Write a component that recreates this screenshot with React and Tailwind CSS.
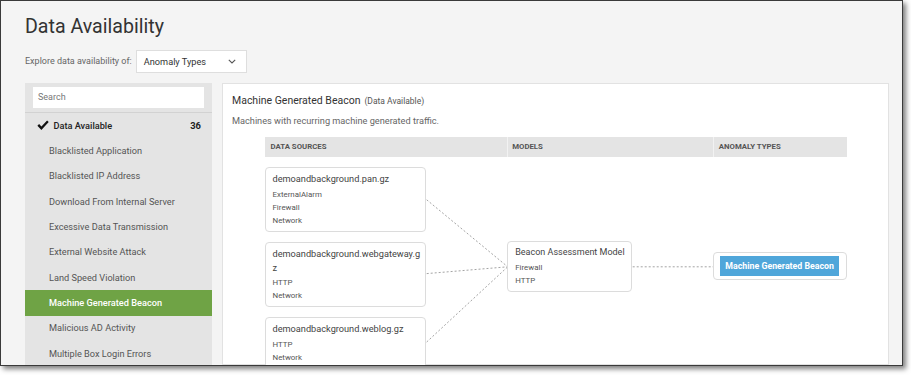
import React from "react";

const items = [
  "Blacklisted Application",
  "Blacklisted IP Address",
  "Download From Internal Server",
  "Excessive Data Transmission",
  "External Website Attack",
  "Land Speed Violation",
  "Machine Generated Beacon",
  "Malicious AD Activity",
  "Multiple Box Login Errors",
];

const sources = [
  { title: "demoandbackground.pan.gz", items: ["ExternalAlarm", "Firewall", "Network"] },
  { title: "demoandbackground.webgateway.gz", items: ["HTTP", "Network"] },
  { title: "demoandbackground.weblog.gz", items: ["HTTP", "Network"] },
];

function Check() {
  return (
    <svg width="12" height="11" viewBox="0 0 12 11" className="block">
      <path d="M0.4 5.8 L2.1 4.1 L4.4 6.5 L10.1 0.4 L11.7 2 L4.4 9.9 Z" fill="#111" />
    </svg>
  );
}

function SourceCard({ title, items }) {
  return (
    <div className="w-[161.5px] rounded-[4px] border border-[#dcdcdc] bg-white pl-[7px] pr-[3px] pt-[4px] pb-[3px]">
      <div className="text-[9.2px] leading-[13.4px] text-[#444] break-all">{title}</div>
      <div className="mt-[2px]">
        {items.map((i) => (
          <div key={i} className="text-[7.9px] leading-[13.4px] text-[#555]">
            {i}
          </div>
        ))}
      </div>
    </div>
  );
}

export default function App() {
  return (
    <div className="w-[911px] h-[375px] bg-white font-[Roboto,sans-serif]">
      <div className="w-[903px] h-[366px] border border-[#3a3a3a] bg-[#f4f4f4] overflow-hidden flex flex-col shadow-[3px_3px_5px_rgba(0,0,0,0.5)]">
        <div className="pt-[13.5px] pl-[24px]">
          <h1 className="text-[19.6px] leading-[24px] text-[#333] font-normal">Data Availability</h1>
        </div>
        <div className="mt-[11.5px] pl-[24px] flex items-center gap-[4px]">
          <span className="text-[9px] text-[#666]">Explore data availability of:</span>
          <div className="w-[111px] h-[23px] bg-white border border-[#dedede] flex items-center justify-between pl-[7px] pr-[10px]">
            <span className="text-[9.2px] text-[#333]">Anomaly Types</span>
            <svg width="8" height="5" viewBox="0 0 8 5">
              <polyline points="0.8,0.8 4,4 7.2,0.8" fill="none" stroke="#555" strokeWidth="1.1" />
            </svg>
          </div>
        </div>
        <div className="mt-[10px] flex-1 min-h-0 flex gap-[10px] pl-[24px] pr-[13px]">
          <div className="w-[187px] flex-none bg-[#e4e4e4] flex flex-col">
            <div className="flex-none px-[8px] pt-[4px] pb-[4px] border-b border-[#d2d2d2]">
              <div className="h-[21px] bg-white flex items-center pl-[5px] text-[9px] text-[#777]">Search</div>
            </div>
            <div className="flex-none h-[25.33px] flex items-center pl-[11.5px] pr-[11px]">
              <Check />
              <span className="ml-[5px] text-[9.2px] font-medium text-[#222] flex-1">Data Available</span>
              <span className="text-[9.4px] font-bold text-[#222]">36</span>
            </div>
            {items.map((it) => {
              const active = it === "Machine Generated Beacon";
              return (
                <div
                  key={it}
                  className={
                    active
                      ? "flex-none h-[25.33px] flex items-center pl-[24px] bg-[#6fa345] text-white text-[9.2px] font-medium"
                      : "flex-none h-[25.33px] flex items-center pl-[24px] text-[#555] text-[9.2px]"
                  }
                >
                  {it}
                </div>
              );
            })}
          </div>
          <div className="flex-1 bg-white border border-[#e2e2e2] pt-[8px] px-[9px]">
            <div className="leading-[14px] text-[#333]">
              <span className="text-[10.5px]">Machine Generated Beacon</span>{" "}
              <span className="text-[8.5px] text-[#555]">(Data Available)</span>
            </div>
            <div className="mt-[6px] text-[9.2px] leading-[14px] text-[#666]">
              Machines with recurring machine generated traffic.
            </div>
            <div className="w-[582px] mx-auto mt-[8.5px]">
              <div className="h-[20px] bg-[#e4e4e4] flex text-[7.8px] font-bold text-[#555] uppercase">
                <div className="w-[242.7px] flex items-center pl-[6px]">Data Sources</div>
                <div className="w-[205.6px] flex items-center pl-[4px] border-l border-[#f2f2f2]">Models</div>
                <div className="flex-1 flex items-center pl-[5px] border-l border-[#f2f2f2]">Anomaly Types</div>
              </div>
              <div className="relative flex">
                <svg className="absolute left-0 top-0 overflow-visible pointer-events-none" width="582" height="220">
                  <g stroke="#9a9a9a" strokeWidth="0.9" strokeDasharray="2 2" fill="none">
                    <line x1="161.7" y1="42.8" x2="242.7" y2="109.8" />
                    <line x1="161.7" y1="116.6" x2="242.7" y2="109.8" />
                    <line x1="161.7" y1="185" x2="242.7" y2="109.8" />
                    <line x1="367.7" y1="109.8" x2="448.7" y2="109.8" />
                  </g>
                </svg>
                <div className="w-[242.7px] pt-[10.6px] flex flex-col gap-[10.5px]">
                  {sources.map((s) => (
                    <SourceCard key={s.title} {...s} />
                  ))}
                </div>
                <div className="w-[205.6px] pt-[84px]">
                  <div className="w-[125px] rounded-[4px] border border-[#dcdcdc] bg-white pl-[7px] pr-[2px] pt-[4px] pb-[3px] relative">
                    <div className="text-[9px] leading-[13.4px] text-[#444] whitespace-nowrap">Beacon Assessment Model</div>
                    <div className="mt-[2px]">
                      <div className="text-[7.9px] leading-[13.4px] text-[#555]">Firewall</div>
                      <div className="text-[7.9px] leading-[13.4px] text-[#555]">HTTP</div>
                    </div>
                  </div>
                </div>
                <div className="flex-1 pt-[95.6px]">
                  <div className="rounded-[4px] border border-[#dcdcdc] bg-white px-[6.3px] py-[3.4px] relative">
                    <div className="h-[19.3px] bg-[#4fa6da] text-white text-[8.8px] font-bold flex items-center justify-center whitespace-nowrap">
                      Machine Generated Beacon
                    </div>
                  </div>
                </div>
              </div>
            </div>
          </div>
        </div>
      </div>
    </div>
  );
}
